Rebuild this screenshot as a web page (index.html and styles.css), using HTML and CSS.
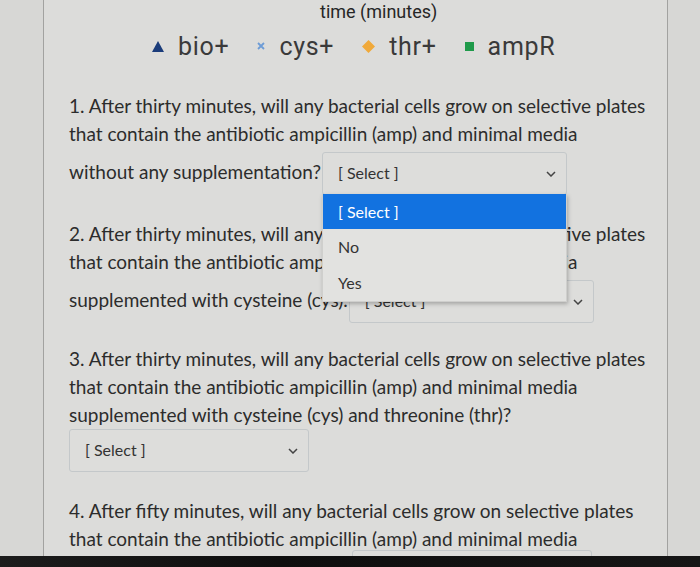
FILE: index.html
```html
<!DOCTYPE html>
<html lang="en">
<head>
<meta charset="utf-8">
<title>Quiz</title>
<link rel="stylesheet" href="styles.css">
</head>
<body>
<div class="screen">
  <div class="frame">
    <div class="axis-title">time (minutes)</div>
    <div class="legend">
      <span class="legend-item"><svg class="mk" width="12" height="11" viewBox="0 0 12 11"><polygon points="6,0 12,11 0,11" fill="#1b3c7a"/></svg><span>bio+</span></span>
      <span class="legend-item"><svg class="mk" width="8" height="8" viewBox="0 0 8 8"><path d="M1 1L7 7M7 1L1 7" stroke="#6d9cd6" stroke-width="1.8"/></svg><span>cys+</span></span>
      <span class="legend-item"><svg class="mk" width="13" height="13" viewBox="0 0 13 13"><polygon points="6.5,0 13,6.5 6.5,13 0,6.5" fill="#f0a93a"/></svg><span>thr+</span></span>
      <span class="legend-item"><svg class="mk" width="9" height="9" viewBox="0 0 9 9"><rect width="9" height="9" fill="#1f9a4a"/></svg><span>ampR</span></span>
    </div>

    <div class="q q1">1. After thirty minutes, will any bacterial cells grow on selective plates<br>that contain the antibiotic ampicillin (amp) and minimal media<br>without any supplementation?<span class="select open"><span class="select-label">[ Select ]</span><svg class="chev" width="10" height="6" viewBox="0 0 10 6"><path d="M1 1l4 4 4-4" fill="none" stroke="#444" stroke-width="1.5"/></svg><span class="dropdown"><span class="opt opt-active">[ Select ]</span><span class="opt">No</span><span class="opt">Yes</span></span></span></div>

    <div class="q q2">2. After thirty minutes, will any bacterial cells grow on selective plates<br>that contain the antibiotic ampicillin (amp) and minimal media<br>supplemented with cysteine (cys).<span class="select"><span class="select-label">[ Select ]</span><svg class="chev" width="10" height="6" viewBox="0 0 10 6"><path d="M1 1l4 4 4-4" fill="none" stroke="#444" stroke-width="1.5"/></svg></span></div>

    <div class="q q3">3. After thirty minutes, will any bacterial cells grow on selective plates<br>that contain the antibiotic ampicillin (amp) and minimal media<br>supplemented with cysteine (cys) and threonine (thr)?<br><span class="select select-own"><span class="select-label">[ Select ]</span><svg class="chev" width="10" height="6" viewBox="0 0 10 6"><path d="M1 1l4 4 4-4" fill="none" stroke="#444" stroke-width="1.5"/></svg></span></div>

    <div class="q q4">4. After fifty minutes, will any bacterial cells grow on selective plates<br>that contain the antibiotic ampicillin (amp) and minimal media<br><span class="select select-peek"></span></div>
  </div>
  <div class="taskbar"></div>
</div>
</body>
</html>
```

FILE: styles.css
```css
html, body {
  margin: 0;
  padding: 0;
  background: #d8d8d6;
}

.screen {
  width: 700px;
  height: 567px;
  overflow: hidden;
  display: flex;
  flex-direction: column;
  background: #d7d7d5;
}

.frame {
  flex: 1;
  min-height: 0;
  margin-left: 43px;
  width: 625px;
  box-sizing: border-box;
  border-left: 1px solid #a2a2a0;
  border-right: 1px solid #a2a2a0;
  background: #dcdcda;
  padding-left: 25px;
  overflow: hidden;
}

.taskbar {
  flex: none;
  height: 11px;
  background: linear-gradient(90deg, #1c1c1c, #0e0e0e 40%, #161616);
}

.axis-title {
  font-family: Roboto, "Liberation Sans", sans-serif;
  font-size: 18px;
  line-height: 24px;
  color: #262626;
  padding-left: 251px;
}

.legend {
  display: flex;
  align-items: center;
  margin-top: 7px;
  height: 30px;
  padding-left: 83px;
  font-family: Roboto, "Liberation Sans", sans-serif;
  font-size: 25px;
  letter-spacing: 0.7px;
  color: #3a3a3a;
}

.legend-item {
  display: flex;
  align-items: center;
  gap: 14px;
  margin-right: 28px;
}

.mk {
  display: block;
  flex: none;
}

.q {
  font-family: Lato, "Open Sans", sans-serif;
  font-size: 19px;
  line-height: 28px;
  color: #2c2c2c;
  white-space: nowrap;
}

.q1 { margin-top: 31px; }
.q2 { margin-top: 21px; }
.q3 { margin-top: 18px; }
.q4 { margin-top: 21px; }

.select {
  position: relative;
  display: inline-flex;
  align-items: center;
  justify-content: space-between;
  box-sizing: border-box;
  width: 245px;
  height: 43px;
  margin: 4px 0 4px 1px;
  padding: 0 10px 0 15px;
  vertical-align: 0;
  border: 1px solid #c4c8ca;
  border-radius: 3px;
  background: #dddddb;
  font-size: 16px;
  line-height: 20px;
  color: #333;
}

.select-own {
  width: 240px;
  margin: 0 0 4px 0;
}

.select-peek {
  width: 240px;
  margin: -3px 0 0 283px;
}

.select-label {
  padding-bottom: 2px;
}

.chev {
  display: block;
}

.dropdown {
  position: absolute;
  z-index: 2;
  left: -1px;
  top: 100%;
  width: 245px;
  display: flex;
  flex-direction: column;
  background: #e2e2e0;
  box-shadow: 1px 2px 4px rgba(0, 0, 0, 0.25);
  border: 1px solid #cfcfcd;
  border-top: none;
  box-sizing: border-box;
}

.opt {
  display: block;
  height: 36px;
  line-height: 36px;
  padding-left: 15px;
  color: #333;
}

.opt-active {
  height: 35px;
  line-height: 35px;
  background: #1272e0;
  color: #fff;
}
```
